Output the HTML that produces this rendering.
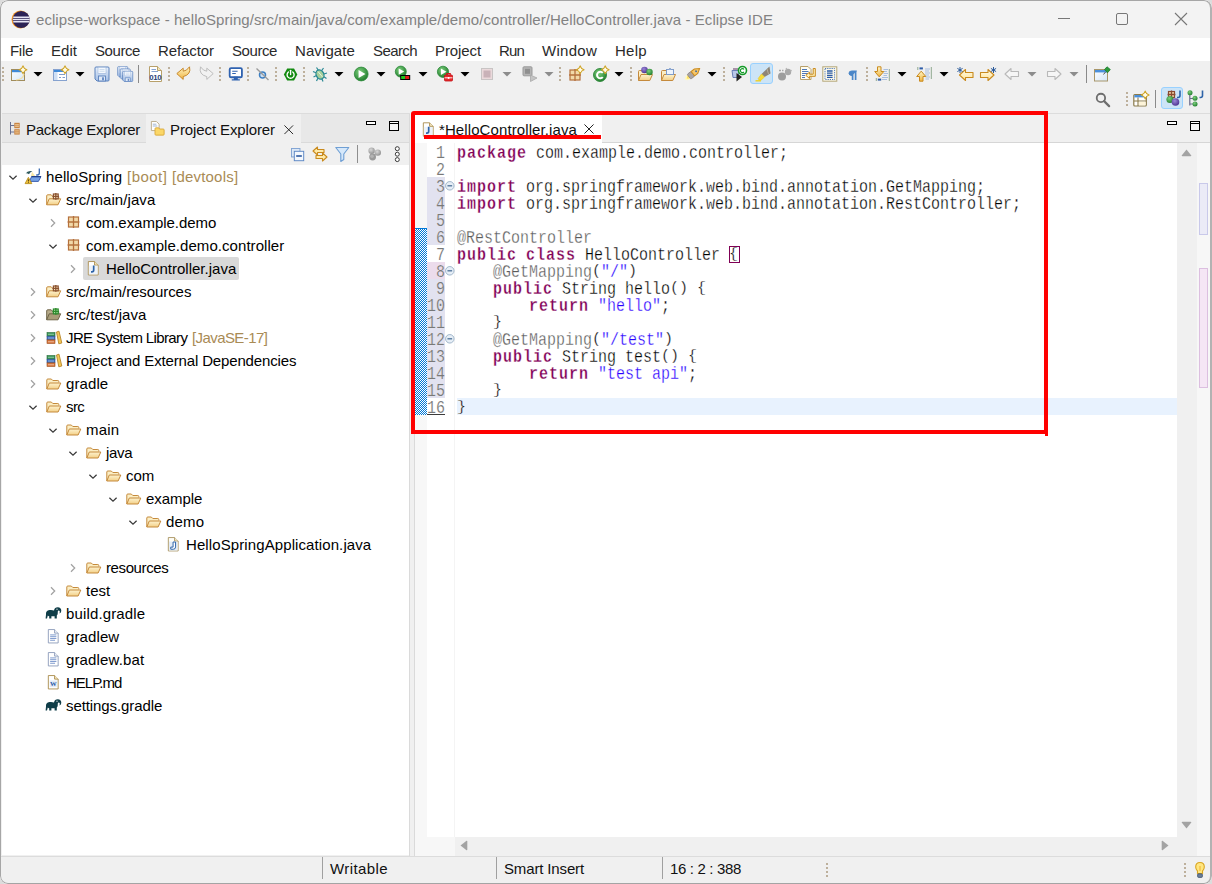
<!DOCTYPE html>
<html><head><meta charset="utf-8"><title>Eclipse IDE</title>
<style>
html,body{margin:0;padding:0}
body{width:1212px;height:884px;overflow:hidden;background:#dcdcdc;position:relative;font-family:"Liberation Sans", sans-serif;}
#win{position:absolute;left:0;top:0;width:1212px;height:884px;overflow:hidden;background:#f0f0f0;border-radius:8px}
#frame{position:absolute;left:0;top:0;width:1212px;height:884px;box-sizing:border-box;border:1px solid #a6a6a6;border-right:2px solid #b2b2b2;border-bottom:1px solid #a4a4a4;border-radius:8px;pointer-events:none}
.t{position:absolute;white-space:pre;line-height:20px;font-family:"Liberation Sans", sans-serif}
#title{position:absolute;left:0;top:0;width:1212px;height:38px;background:#f3f3f3}
#menu{position:absolute;left:1px;top:38px;width:1210px;height:23px;background:#fff}
.hd{position:absolute;width:2px;background:repeating-linear-gradient(#bdb09c 0 2px,transparent 2px 4px)}
.selbtn{position:absolute;background:#cce4f7;border:1px solid #99d1ff;border-radius:3px;box-sizing:border-box}
#lp{position:absolute;left:2px;top:113px;width:408px;height:743px;background:#f0f0f0;border-top:1px solid #dcdcdc;box-sizing:border-box}
#lp-tabs{position:absolute;left:2px;top:114px;width:408px;height:29px;background:#e8e8e8;border-bottom:1px solid #dadada;box-sizing:border-box}
#lp-active{position:absolute;left:146px;top:114px;width:155px;height:29px;background:#f0f0f0}
#lp-tree{position:absolute;left:2px;top:165px;width:408px;height:690px;background:#fff}
#ed{position:absolute;left:414px;top:113px;width:796px;height:743px;background:#f0f0f0;border-top:1px solid #dcdcdc;box-sizing:border-box}
#ed-tabs{position:absolute;left:415px;top:114px;width:795px;height:29px;background:#f0f0f0;border-bottom:1px solid #d6d6d6;box-sizing:border-box}
#ed-tab{position:absolute;left:415px;top:114px;width:187px;height:29px;background:#fff}
#ed-body{position:absolute;left:415px;top:143px;width:795px;height:713px;background:#fff}
.ln,.cl{position:absolute;font-family:"Liberation Mono", monospace;font-size:15px;line-height:17px;height:17px;white-space:pre;transform:scaleY(1.2);transform-origin:0 12px}
.ln{left:427px;width:18px;text-align:right;color:#787878;letter-spacing:0px}
.ln span{display:inline-block}
.cl{left:457px;color:#000;-webkit-text-stroke:0.25px #fff}
.ln{-webkit-text-stroke:0.12px #fff}
.cl b{color:#7f0055;letter-spacing:1px;font-weight:700;-webkit-text-stroke:0.25px #fff}
.bc{display:inline-block;transform:translateY(-1.2px) scaleY(0.86);transform-origin:0 50%}
#status{position:absolute;left:0;top:856px;width:1212px;height:28px;background:#f0f0f0;border-top:1px solid #dcdcdc;box-sizing:border-box}
.ic{position:absolute;overflow:visible}
#edge-b{position:absolute;left:0;top:882px;width:1212px;height:2px;background:linear-gradient(#c8c8c8,#8c8c8c)}
#edge-l{position:absolute;left:0;top:0;width:1px;height:884px;background:#9a9a9a}
#edge-r{position:absolute;left:1210px;top:0;width:2px;height:884px;background:#b0b0b0}
</style></head>
<body><div id="win">

<svg width="0" height="0" style="position:absolute">
<defs>
<linearGradient id="gY" x1="0" y1="0" x2="0" y2="1"><stop offset="0" stop-color="#fff6c8"/><stop offset="1" stop-color="#f0b440"/></linearGradient>
<linearGradient id="gYh" x1="0" y1="0" x2="0" y2="1"><stop offset="0" stop-color="#fffbe6"/><stop offset="1" stop-color="#ffe39a"/></linearGradient>
<linearGradient id="gF" x1="0" y1="0" x2="0" y2="1"><stop offset="0" stop-color="#fdf3d0"/><stop offset="1" stop-color="#f3cf86"/></linearGradient>
<linearGradient id="gB" x1="0" y1="0" x2="0" y2="1"><stop offset="0" stop-color="#eaf1fb"/><stop offset="1" stop-color="#a2bde4"/></linearGradient>
<linearGradient id="gW" x1="0" y1="0" x2="1" y2="1"><stop offset="0" stop-color="#ffffff"/><stop offset="1" stop-color="#d4e6f8"/></linearGradient>
<radialGradient id="gG" cx="0.4" cy="0.35" r="0.7"><stop offset="0" stop-color="#7ccf7c"/><stop offset="1" stop-color="#1e7a2a"/></radialGradient>
<radialGradient id="gP" cx="0.4" cy="0.35" r="0.7"><stop offset="0" stop-color="#9a86d8"/><stop offset="1" stop-color="#4a2f8e"/></radialGradient>
<radialGradient id="gGr" cx="0.4" cy="0.35" r="0.7"><stop offset="0" stop-color="#d8d8d8"/><stop offset="1" stop-color="#8e8e8e"/></radialGradient>
</defs></svg>

<div id="title"></div>
<svg class="ic" style="left:9.7px;top:9.5px" width="20" height="19" viewBox="0 0 20 19"><circle cx="10.5" cy="9.5" r="9" fill="#f7941e"/><circle cx="11.2" cy="9.5" r="8.6" fill="#2c2255"/><path d="M3.2 7.2H19.4M2.8 9.5H19.8M3.2 11.8H19.4" stroke="#e8e6f4" stroke-width="1.5"/></svg>
<span class="t" style="left:36px;top:9.5px;color:#828282;font-size:15px;letter-spacing:0.062px;">eclipse-workspace - helloSpring/src/main/java/com/example/demo/controller/HelloController.java - Eclipse IDE</span>
<div style="position:absolute;left:1058px;top:18px;width:12px;height:1px;background:#777"></div>
<div style="position:absolute;left:1116px;top:13px;width:10px;height:10px;border:1px solid #777;border-radius:2px"></div>
<svg style="position:absolute;left:1174px;top:12px" width="14" height="14" viewBox="0 0 14 14"><path d="M1 1L13 13M13 1L1 13" stroke="#777" stroke-width="1.1" fill="none"/></svg>
<div id="menu"></div>
<span class="t" style="left:10px;top:40.5px;color:#2a2a2a;font-size:15px;letter-spacing:-0.293px;">File</span>
<span class="t" style="left:51px;top:40.5px;color:#2a2a2a;font-size:15px;letter-spacing:0.035px;">Edit</span>
<span class="t" style="left:95px;top:40.5px;color:#2a2a2a;font-size:15px;letter-spacing:-0.422px;">Source</span>
<span class="t" style="left:158px;top:40.5px;color:#2a2a2a;font-size:15px;letter-spacing:-0.088px;">Refactor</span>
<span class="t" style="left:232px;top:40.5px;color:#2a2a2a;font-size:15px;letter-spacing:-0.422px;">Source</span>
<span class="t" style="left:295px;top:40.5px;color:#2a2a2a;font-size:15px;letter-spacing:0.100px;">Navigate</span>
<span class="t" style="left:373px;top:40.5px;color:#2a2a2a;font-size:15px;letter-spacing:-0.589px;">Search</span>
<span class="t" style="left:435px;top:40.5px;color:#2a2a2a;font-size:15px;letter-spacing:-0.098px;">Project</span>
<span class="t" style="left:499px;top:40.5px;color:#2a2a2a;font-size:15px;letter-spacing:-0.844px;">Run</span>
<span class="t" style="left:542px;top:40.5px;color:#2a2a2a;font-size:15px;letter-spacing:0.273px;">Window</span>
<span class="t" style="left:615px;top:40.5px;color:#2a2a2a;font-size:15px;letter-spacing:0.285px;">Help</span>
<div class="hd" style="left:2px;top:67px;height:14px"></div>
<svg class="ic" style="left:11px;top:66px" width="16" height="16" viewBox="0 0 16 16"><rect x="0.5" y="3.5" width="13" height="11" fill="url(#gW)" stroke="#a08c5c"/><rect x="1" y="4" width="12" height="2.2" fill="#3f8ad8"/><path d="M13 8Q12 13.5 5 14" fill="none" stroke="#f5dd9a" stroke-width="1.2"/><path d="M12 -0.10000000000000009Q12.8 3.0 15.9 3.8Q12.8 4.6 12 7.699999999999999Q11.2 4.6 8.1 3.8Q11.2 3.0 12 -0.10000000000000009Z" fill="#fdeea0" stroke="#cfa42a" stroke-width="1.1" stroke-linejoin="round"/><path d="M12 1.7V5.8999999999999995M9.9 3.8H14.1" stroke="#fffdf0" stroke-width="1.3"/></svg>
<svg style="position:absolute;left:33px;top:72px" width="10" height="5" viewBox="0 0 10 5"><path d="M0.5 0H9.5L5 4.6Z" fill="#000"/></svg>
<svg class="ic" style="left:53px;top:66px" width="16" height="16" viewBox="0 0 16 16"><rect x="0.5" y="3.5" width="13" height="11" fill="#fff" stroke="#86a2cf"/><rect x="1" y="4" width="12" height="2" fill="#3f8ad8"/><rect x="1" y="6" width="3.5" height="8" fill="#cfe0f5"/><path d="M6 8.5H12M6 11.5H8M9.5 11.5H12" stroke="#7f9cca" stroke-width="1.2"/><path d="M12 -0.10000000000000009Q12.8 3.0 15.9 3.8Q12.8 4.6 12 7.699999999999999Q11.2 4.6 8.1 3.8Q11.2 3.0 12 -0.10000000000000009Z" fill="#fdeea0" stroke="#cfa42a" stroke-width="1.1" stroke-linejoin="round"/><path d="M12 1.7V5.8999999999999995M9.9 3.8H14.1" stroke="#fffdf0" stroke-width="1.3"/></svg>
<svg style="position:absolute;left:75px;top:72px" width="10" height="5" viewBox="0 0 10 5"><path d="M0.5 0H9.5L5 4.6Z" fill="#000"/></svg>
<svg class="ic" style="left:94px;top:66px" width="16" height="16" viewBox="0 0 16 16"><g transform="translate(0.5 0.5) scale(1)"><path d="M1.5 0.5H13.5Q14.5 0.5 14.5 1.5V13.5Q14.5 14.5 13.5 14.5H2.5L0.5 12.5V1.5Q0.5 0.5 1.5 0.5Z" fill="url(#gB)" stroke="#5b82bd" stroke-width="1"/><rect x="3.5" y="0.8" width="8" height="6" fill="#f4f8fd" stroke="#9ab4da" stroke-width="0.6"/><path d="M5 3H10M5 4.8H10" stroke="#c4d4ea" stroke-width="0.8"/><rect x="4" y="9.5" width="7" height="5" fill="#dfe9f7" stroke="#5b82bd" stroke-width="0.9"/><rect x="7.5" y="10.8" width="2" height="3" fill="#6c8fc6"/></g></svg>
<svg class="ic" style="left:117px;top:66px" width="17" height="16" viewBox="0 0 17 16"><g transform="translate(0.3 0.3) scale(0.72)"><path d="M1.5 0.5H13.5Q14.5 0.5 14.5 1.5V13.5Q14.5 14.5 13.5 14.5H2.5L0.5 12.5V1.5Q0.5 0.5 1.5 0.5Z" fill="url(#gB)" stroke="#5b82bd" stroke-width="1"/><rect x="3.5" y="0.8" width="8" height="6" fill="#f4f8fd" stroke="#9ab4da" stroke-width="0.6"/><path d="M5 3H10M5 4.8H10" stroke="#c4d4ea" stroke-width="0.8"/><rect x="4" y="9.5" width="7" height="5" fill="#dfe9f7" stroke="#5b82bd" stroke-width="0.9"/><rect x="7.5" y="10.8" width="2" height="3" fill="#6c8fc6"/></g><g transform="translate(2.8 2.6) scale(0.72)"><path d="M1.5 0.5H13.5Q14.5 0.5 14.5 1.5V13.5Q14.5 14.5 13.5 14.5H2.5L0.5 12.5V1.5Q0.5 0.5 1.5 0.5Z" fill="url(#gB)" stroke="#5b82bd" stroke-width="1"/><rect x="3.5" y="0.8" width="8" height="6" fill="#f4f8fd" stroke="#9ab4da" stroke-width="0.6"/><path d="M5 3H10M5 4.8H10" stroke="#c4d4ea" stroke-width="0.8"/><rect x="4" y="9.5" width="7" height="5" fill="#dfe9f7" stroke="#5b82bd" stroke-width="0.9"/><rect x="7.5" y="10.8" width="2" height="3" fill="#6c8fc6"/></g><g transform="translate(5.3 5) scale(0.72)"><path d="M1.5 0.5H13.5Q14.5 0.5 14.5 1.5V13.5Q14.5 14.5 13.5 14.5H2.5L0.5 12.5V1.5Q0.5 0.5 1.5 0.5Z" fill="url(#gB)" stroke="#5b82bd" stroke-width="1"/><rect x="3.5" y="0.8" width="8" height="6" fill="#f4f8fd" stroke="#9ab4da" stroke-width="0.6"/><path d="M5 3H10M5 4.8H10" stroke="#c4d4ea" stroke-width="0.8"/><rect x="4" y="9.5" width="7" height="5" fill="#dfe9f7" stroke="#5b82bd" stroke-width="0.9"/><rect x="7.5" y="10.8" width="2" height="3" fill="#6c8fc6"/></g></svg>
<div style="position:absolute;left:138px;top:65px;width:1px;height:18px;background:#8a8a8a"></div>
<svg class="ic" style="left:148px;top:66px" width="16" height="16" viewBox="0 0 16 16"><path d="M1.5 0.5H9.5L13.5 4.5V15.5H1.5Z" fill="#fff" stroke="#b8a06a"/><path d="M9.5 0.5V4.5H13.5" fill="#f3e6b8" stroke="#b8a06a"/><path d="M3.5 3.5H8M3.5 5.5H10" stroke="#86a2cf" stroke-width="1"/><text x="1.2" y="14" font-family="Liberation Sans" font-weight="700" font-size="7.8" fill="#1f3f7a" letter-spacing="-0.3">010</text></svg>
<div class="hd" style="left:168px;top:67px;height:14px"></div>
<svg class="ic" style="left:176px;top:66px" width="16" height="16" viewBox="0 0 16 16"><path d="M0.8 7.6L7.2 2.2V5.2Q10.5 5.2 13.5 0.8Q15.5 8.5 7.2 10.6V13.4Z" fill="url(#gY)" stroke="#c8882a" stroke-width="1" stroke-linejoin="round"/></svg>
<svg class="ic" style="left:198px;top:66px" width="16" height="16" viewBox="0 0 16 16"><path d="M15.2 7.6L8.8 2.2V5.2Q5.5 5.2 2.5 0.8Q0.5 8.5 8.8 10.6V13.4Z" fill="#f2f2f2" stroke="#bdbdbd" stroke-width="1" stroke-linejoin="round"/></svg>
<div class="hd" style="left:219px;top:67px;height:14px"></div>
<svg class="ic" style="left:227.5px;top:66px" width="16" height="16" viewBox="0 0 16 16"><g transform="translate(0.6 1) scale(0.9)"><rect x="1.2" y="1.2" width="13.6" height="10.2" rx="1.5" fill="#fff" stroke="#2f62b0" stroke-width="2"/><path d="M4 4.8H10M4 7.2H8" stroke="#2f62b0" stroke-width="1.2"/><path d="M6.5 11.5H9.5V13.5H6.5ZM3.5 14.3H12.5" stroke="#2f62b0" stroke-width="1.4" fill="#2f62b0"/></g></svg>
<div class="hd" style="left:247px;top:67px;height:14px"></div>
<svg class="ic" style="left:255px;top:66px" width="16" height="16" viewBox="0 0 16 16"><circle cx="7.5" cy="9" r="3" fill="#cfe2f5" stroke="#3d7fc2" stroke-width="1.5"/><path d="M1.5 2.5L13.5 14" stroke="#9a9a9a" stroke-width="1.3"/></svg>
<div class="hd" style="left:275px;top:67px;height:14px"></div>
<svg class="ic" style="left:282.8px;top:66px" width="16" height="16" viewBox="0 0 16 16"><g transform="translate(0.4 1.3) scale(0.9)"><path d="M4.2 1.2H11.8L15.5 8L11.8 14.8H4.2L0.5 8Z" fill="#138a10"/><path d="M5.6 5.2A3.9 3.9 0 1 0 10.4 5.2" fill="none" stroke="#fff" stroke-width="1.5" stroke-linecap="round"/><path d="M8 3.4V8" stroke="#fff" stroke-width="1.5" stroke-linecap="round"/></g></svg>
<div class="hd" style="left:303px;top:67px;height:14px"></div>
<svg class="ic" style="left:312px;top:66px" width="16" height="16" viewBox="0 0 16 16"><path d="M4.5 1.5L6.5 4.5M11.5 2L9.8 4.5M1 5.5L4.5 7M15 7L11.8 8M1.5 11L4.5 9.5M14.5 12.5L11.5 10.5M4.5 15L6 12M11 15.5L9.8 12.5" stroke="#2b8a95" stroke-width="1.2" fill="none"/><ellipse cx="8" cy="8.5" rx="3.8" ry="4.8" transform="rotate(-25 8 8.5)" fill="#a6cf9c" stroke="#2b8a95" stroke-width="1.3"/><path d="M6 5.5L10.5 11" stroke="#e8f4e0" stroke-width="1"/></svg>
<svg style="position:absolute;left:334px;top:72px" width="10" height="5" viewBox="0 0 10 5"><path d="M0.5 0H9.5L5 4.6Z" fill="#000"/></svg>
<svg class="ic" style="left:353px;top:66px" width="16" height="16" viewBox="0 0 16 16"><circle cx="8.2" cy="8" r="6.9" fill="url(#gG)" stroke="#2c8a3a" stroke-width="0.8"/><path d="M5.577999999999999 3.998L12.478 8L5.577999999999999 12.001999999999999Z" fill="#fff"/></svg>
<svg style="position:absolute;left:376px;top:72px" width="10" height="5" viewBox="0 0 10 5"><path d="M0.5 0H9.5L5 4.6Z" fill="#000"/></svg>
<svg class="ic" style="left:395px;top:66px" width="16" height="16" viewBox="0 0 16 16"><circle cx="5.8" cy="5.6" r="5.5" fill="url(#gG)" stroke="#2c8a3a" stroke-width="0.8"/><path d="M3.71 2.4099999999999997L9.21 5.6L3.71 8.79Z" fill="#fff"/><rect x="5.2" y="9" width="10" height="5" fill="#000"/><rect x="6.2" y="10" width="4" height="3" fill="#1ec81e"/><rect x="10.2" y="10" width="4" height="3" fill="#e01818"/></svg>
<svg style="position:absolute;left:418px;top:72px" width="10" height="5" viewBox="0 0 10 5"><path d="M0.5 0H9.5L5 4.6Z" fill="#000"/></svg>
<svg class="ic" style="left:437px;top:66px" width="16" height="16" viewBox="0 0 16 16"><circle cx="6" cy="5.8" r="5.6" fill="url(#gG)" stroke="#2c8a3a" stroke-width="0.8"/><path d="M3.8720000000000003 2.552L9.472 5.8L3.8720000000000003 9.048Z" fill="#fff"/><rect x="7.5" y="9" width="8" height="6" rx="1" fill="#e8292c" stroke="#c01014" stroke-width="0.8"/><path d="M9.8 9V7.6H13.2V9" fill="none" stroke="#d01a1e" stroke-width="1.2"/><path d="M7.5 11.8H15.5" stroke="#fff" stroke-width="0.9"/><rect x="10.8" y="11" width="1.6" height="1.8" fill="#fff"/></svg>
<svg style="position:absolute;left:460px;top:72px" width="10" height="5" viewBox="0 0 10 5"><path d="M0.5 0H9.5L5 4.6Z" fill="#000"/></svg>
<svg class="ic" style="left:480px;top:66px" width="16" height="16" viewBox="0 0 16 16"><rect x="1.5" y="2.5" width="11" height="11" fill="#ead9db" stroke="#c8c4c4" stroke-width="1"/><rect x="3.5" y="4.5" width="7" height="7" fill="#c9b2b8"/></svg>
<svg style="position:absolute;left:502px;top:72px" width="10" height="5" viewBox="0 0 10 5"><path d="M0.5 0H9.5L5 4.6Z" fill="#8c8c8c"/></svg>
<svg class="ic" style="left:522px;top:66px" width="16" height="16" viewBox="0 0 16 16"><rect x="1" y="0.8" width="9" height="9" rx="1" fill="#b4b4b4" stroke="#9a9a9a"/><rect x="3" y="2.8" width="5" height="5" fill="#8f8f8f"/><path d="M8.5 9L15 12L8.5 15.5Z" fill="#c4c4c4" stroke="#a8a8a8" stroke-width="0.8"/></svg>
<svg style="position:absolute;left:544px;top:72px" width="10" height="5" viewBox="0 0 10 5"><path d="M0.5 0H9.5L5 4.6Z" fill="#8c8c8c"/></svg>
<div class="hd" style="left:559px;top:67px;height:14px"></div>
<svg class="ic" style="left:568px;top:66px" width="16" height="16" viewBox="0 0 16 16"><rect x="2" y="4" width="10" height="10" fill="#f2d9a8" stroke="#b5713c" stroke-width="1.2"/><path d="M7.0 3.1V14.9M1.1 9.0H12.9" stroke="#b5713c" stroke-width="1.3"/><path d="M12.2 -0.10000000000000009Q13.0 3.0 16.099999999999998 3.8Q13.0 4.6 12.2 7.699999999999999Q11.399999999999999 4.6 8.299999999999999 3.8Q11.399999999999999 3.0 12.2 -0.10000000000000009Z" fill="#fdeea0" stroke="#cfa42a" stroke-width="1.1" stroke-linejoin="round"/><path d="M12.2 1.7V5.8999999999999995M10.1 3.8H14.299999999999997" stroke="#fffdf0" stroke-width="1.3"/></svg>
<svg class="ic" style="left:593px;top:66px" width="16" height="16" viewBox="0 0 16 16"><circle cx="7" cy="9" r="6.5" fill="url(#gG)" stroke="#1f7f2c" stroke-width="0.8"/><path d="M9.8 6.8A3.3 3.3 0 1 0 9.8 11.2" fill="none" stroke="#fff" stroke-width="2"/><path d="M12.2 -0.10000000000000009Q13.0 3.0 16.099999999999998 3.8Q13.0 4.6 12.2 7.699999999999999Q11.399999999999999 4.6 8.299999999999999 3.8Q11.399999999999999 3.0 12.2 -0.10000000000000009Z" fill="#fdeea0" stroke="#cfa42a" stroke-width="1.1" stroke-linejoin="round"/><path d="M12.2 1.7V5.8999999999999995M10.1 3.8H14.299999999999997" stroke="#fffdf0" stroke-width="1.3"/></svg>
<svg style="position:absolute;left:614px;top:72px" width="10" height="5" viewBox="0 0 10 5"><path d="M0.5 0H9.5L5 4.6Z" fill="#000"/></svg>
<div class="hd" style="left:630px;top:67px;height:14px"></div>
<svg class="ic" style="left:637px;top:66px" width="16" height="16" viewBox="0 0 16 16"><g transform="translate(0 1)"><path d="M1.5 13.5V4.5Q1.5 3.5 2.5 3.5H6L7.5 5H12.5Q13.5 5 13.5 6V7" fill="#fbeec4" stroke="#c58a3c" stroke-width="1"/><path d="M1.5 13.5L4 7.5H15.5L12.8 13.5Z" fill="url(#gF)" stroke="#c58a3c" stroke-width="1" stroke-linejoin="round"/></g><circle cx="7.5" cy="4" r="3.3" fill="url(#gP)"/><circle cx="12.5" cy="6" r="3.2" fill="url(#gG)"/></svg>
<svg class="ic" style="left:660px;top:66px" width="16" height="16" viewBox="0 0 16 16"><g transform="translate(0 1)"><path d="M1.5 13.5V4.5Q1.5 3.5 2.5 3.5H6L7.5 5H12.5Q13.5 5 13.5 6V7" fill="#fbeec4" stroke="#c58a3c" stroke-width="1"/><path d="M1.5 13.5L4 7.5H15.5L12.8 13.5Z" fill="url(#gF)" stroke="#c58a3c" stroke-width="1" stroke-linejoin="round"/></g><rect x="6.5" y="3.5" width="7" height="5" fill="#eef4fc" stroke="#7f9cca"/><path d="M8.5 3.5Q10 1 11.5 3.5" fill="#a9bfe0" stroke="#7f9cca" stroke-width="0.8"/></svg>
<svg class="ic" style="left:684px;top:66px" width="17" height="16" viewBox="0 0 17 16"><g transform="rotate(-38 8.5 8)"><path d="M-1 8Q1 5 4 5.5V10.5Q1 11 -1 8Z" fill="#fff8c0"/><path d="M1 8Q3 6 5 6V10Q3 10 1 8Z" fill="#ffe060"/><rect x="4" y="5" width="5" height="6" rx="1" fill="#a9a4a4" stroke="#8a8484" stroke-width="0.8"/><path d="M9 5.2H13L17.5 8L13 10.8H9Z" fill="#f6c66a" stroke="#c98a1e" stroke-width="1"/><circle cx="13" cy="8" r="0.9" fill="#2d63a8"/></g></svg>
<svg style="position:absolute;left:707px;top:72px" width="10" height="5" viewBox="0 0 10 5"><path d="M0.5 0H9.5L5 4.6Z" fill="#000"/></svg>
<div class="hd" style="left:723px;top:67px;height:14px"></div>
<svg class="ic" style="left:731px;top:66px" width="16" height="16" viewBox="0 0 16 16"><path d="M1 4.5H8L7 11.5H2Z" fill="#b8c8ea" stroke="#6a7fb8"/><path d="M2 3H7" stroke="#8a6a8a" stroke-width="1.4"/><path d="M5.5 7L11 11L5.5 15.5Z" fill="#222"/><circle cx="11.5" cy="4.5" r="4" fill="#fff" stroke="#149a28" stroke-width="1.6"/><path d="M13 3.4A2 2 0 1 0 13 5.8" fill="none" stroke="#149a28" stroke-width="1.2"/></svg>
<div class="selbtn" style="left:750px;top:63px;width:23px;height:21px"></div>
<svg class="ic" style="left:754.5px;top:66px" width="16" height="16" viewBox="0 0 16 16"><path d="M14.5 0.5L15.5 7.5L9.5 11L6.5 8Z" fill="#8d8577"/><path d="M12 3L13.5 8" stroke="#b5ad9d" stroke-width="1"/><path d="M6.5 8L9.5 11L6 14.2Q3.5 14.8 3.2 12.5Z" fill="#f7dc3c" stroke="#e8c820" stroke-width="0.6"/><path d="M0.5 14.8H6" stroke="#f0d020" stroke-width="1.4"/></svg>
<svg class="ic" style="left:777px;top:66px" width="16" height="16" viewBox="0 0 16 16"><circle cx="5" cy="10.5" r="4" fill="#9d9d9d"/><circle cx="11" cy="6" r="3.2" fill="#a9a9a9"/><path d="M2 4.5H6.5" stroke="#a8a8a8" stroke-width="1.3" stroke-dasharray="2 1"/><path d="M9 2L10 3.5M14.5 4L13.5 5.5" stroke="#b4b4b4" stroke-width="1.2"/></svg>
<svg class="ic" style="left:800px;top:66px" width="16" height="16" viewBox="0 0 16 16"><path d="M0.5 0.5H8L11 3.5V13.5H0.5Z" fill="#fffdf2" stroke="#b8a06a"/><path d="M2 3.5H7M2 5.5H8.5M2 7.5H8.5M2 9.5H5M2 11.5H5" stroke="#4f78b8" stroke-width="1"/><path d="M13.2 2.5H15.3V10.3H9.5V12.5L5.8 9.3L9.5 6.2V8.2H13.2Z" fill="#fff1b8" stroke="#c98a1e" stroke-width="1" stroke-linejoin="round"/></svg>
<svg class="ic" style="left:822px;top:66px" width="16" height="16" viewBox="0 0 16 16"><rect x="0.8" y="0.8" width="14" height="14.4" fill="#fbf8ea" stroke="#b5a77a" stroke-width="1"/><rect x="3" y="2.5" width="9.6" height="11" fill="none" stroke="#4f78b8" stroke-width="1" stroke-dasharray="1.2 1"/><path d="M5 5H10.6M5 7.2H10.6M5 9.4H10.6M5 11.4H10.6" stroke="#2d5ca8" stroke-width="1.3"/></svg>
<svg class="ic" style="left:846px;top:66px" width="14" height="16" viewBox="0 0 14 16"><path d="M6.6 5.5V14M9.6 5.5V14" stroke="#4a86c8" stroke-width="1.7"/><path d="M10.8 5H5.8Q3 5 3 7.3Q3 9.5 6 9.5" fill="#4a86c8" stroke="#4a86c8" stroke-width="1"/></svg>
<div class="hd" style="left:866px;top:67px;height:14px"></div>
<svg class="ic" style="left:874px;top:66px" width="16" height="16" viewBox="0 0 16 16"><path d="M9.5 3.5H14M9.5 5.5H13M9.5 7.5H14M9.5 9.5H13M8 11.5H14M8 13.5H13" stroke="#a9bfe0" stroke-width="1"/><path d="M15.3 3V15" stroke="#8fa88f" stroke-width="1"/><path d="M2.3 12V15" stroke="#8fa88f" stroke-width="1"/><rect x="3.8" y="12.6" width="3.4" height="2" fill="#2d5ca8"/><path d="M3.5 0.8H7V5.5H9.8L5.2 10.8L0.7 5.5H3.5Z" fill="url(#gY)" stroke="#c98a1e" stroke-width="1" stroke-linejoin="round"/></svg>
<svg style="position:absolute;left:897px;top:72px" width="10" height="5" viewBox="0 0 10 5"><path d="M0.5 0H9.5L5 4.6Z" fill="#000"/></svg>
<svg class="ic" style="left:916px;top:66px" width="16" height="16" viewBox="0 0 16 16"><path d="M9 3H14M9 5H13M9 7H14M9 9H13M9.5 11H14M9.5 13H13" stroke="#a9bfe0" stroke-width="1"/><path d="M15.3 1V13" stroke="#8fa88f" stroke-width="1"/><path d="M1.8 1V4" stroke="#8fa88f" stroke-width="1"/><rect x="3.5" y="1.4" width="3.4" height="2" fill="#2d5ca8"/><path d="M3.5 15.2H7V10.5H9.8L5.2 5.2L0.7 10.5H3.5Z" fill="url(#gY)" stroke="#c98a1e" stroke-width="1" stroke-linejoin="round"/></svg>
<svg style="position:absolute;left:939px;top:72px" width="10" height="5" viewBox="0 0 10 5"><path d="M0.5 0H9.5L5 4.6Z" fill="#000"/></svg>
<svg class="ic" style="left:957px;top:66px" width="17" height="16" viewBox="0 0 17 16"><g transform="translate(1.5 1)"><path d="M1 8L7 2.5V5.5H14.5V10.5H7V13.5Z" fill="url(#gYh)" stroke="#c98a1e" stroke-width="1.1" stroke-linejoin="round"/></g><path d="M3 1V7M0.3999999999999999 2.4L5.6 5.6M0.3999999999999999 5.6L5.6 2.4" stroke="#2b5a9a" stroke-width="1"/></svg>
<svg class="ic" style="left:980px;top:66px" width="17" height="16" viewBox="0 0 17 16"><g transform="translate(-1 1)"><path d="M15 8L9 2.5V5.5H1.5V10.5H9V13.5Z" fill="url(#gYh)" stroke="#c98a1e" stroke-width="1.1" stroke-linejoin="round"/></g><path d="M13.5 1V7M10.9 2.4L16.1 5.6M10.9 5.6L16.1 2.4" stroke="#2b5a9a" stroke-width="1"/></svg>
<svg class="ic" style="left:1004px;top:66px" width="16" height="16" viewBox="0 0 16 16"><path d="M1 8L7 2.5V5.5H14.5V10.5H7V13.5Z" fill="#f6f6f6" stroke="#b9b9b9" stroke-width="1.1" stroke-linejoin="round"/></svg>
<svg style="position:absolute;left:1027px;top:72px" width="10" height="5" viewBox="0 0 10 5"><path d="M0.5 0H9.5L5 4.6Z" fill="#8c8c8c"/></svg>
<svg class="ic" style="left:1046px;top:66px" width="16" height="16" viewBox="0 0 16 16"><path d="M15 8L9 2.5V5.5H1.5V10.5H9V13.5Z" fill="#f6f6f6" stroke="#b9b9b9" stroke-width="1.1" stroke-linejoin="round"/></svg>
<svg style="position:absolute;left:1069px;top:72px" width="10" height="5" viewBox="0 0 10 5"><path d="M0.5 0H9.5L5 4.6Z" fill="#8c8c8c"/></svg>
<div style="position:absolute;left:1086px;top:65px;width:1px;height:18px;background:#8a8a8a"></div>
<svg class="ic" style="left:1094px;top:66px" width="17" height="16" viewBox="0 0 17 16"><rect x="0.5" y="3.5" width="13" height="11.5" fill="url(#gW)" stroke="#a8966a"/><rect x="1" y="4" width="12" height="2.4" fill="#4a90dc"/><path d="M9.5 8.5L11.5 6" stroke="#555" stroke-width="1"/><path d="M10.5 3.5L13 0.8L16.3 3.5L13.5 6.8Z" fill="#2c9a3c" stroke="#1c7a2a" stroke-width="0.8"/></svg>
<svg class="ic" style="left:1094.5px;top:91.5px" width="15.5" height="15.5" viewBox="0 0 17 17"><circle cx="6.5" cy="6.5" r="4.6" fill="none" stroke="#6e6e6e" stroke-width="2"/><path d="M10 10L15.5 15.5" stroke="#6e6e6e" stroke-width="2.4" stroke-linecap="round"/></svg>
<div class="hd" style="left:1126px;top:92px;height:14px"></div>
<svg class="ic" style="left:1133px;top:91px" width="16" height="16" viewBox="0 0 16 16"><rect x="0.8" y="3.5" width="12.5" height="11.5" rx="1" fill="#fff" stroke="#8a7a4a" stroke-width="1.2"/><rect x="1.4" y="4" width="11.4" height="2.4" fill="#4a90dc"/><path d="M5 6.5V15M1 10H13" stroke="#8a7a4a" stroke-width="1.1"/><rect x="6" y="10.8" width="6.5" height="3.5" fill="#fdf4d8"/><path d="M12.2 0.10000000000000009Q13.0 3.2 16.099999999999998 4Q13.0 4.8 12.2 7.9Q11.399999999999999 4.8 8.299999999999999 4Q11.399999999999999 3.2 12.2 0.10000000000000009Z" fill="#fdeea0" stroke="#cfa42a" stroke-width="1.1" stroke-linejoin="round"/><path d="M12.2 1.9000000000000001V6.1000000000000005M10.1 4H14.299999999999997" stroke="#fffdf0" stroke-width="1.3"/></svg>
<div style="position:absolute;left:1155px;top:90px;width:1px;height:18px;background:#8a8a8a"></div>
<div class="selbtn" style="left:1161px;top:87px;width:22px;height:22px"></div>
<svg class="ic" style="left:1165px;top:90px" width="16" height="16" viewBox="0 0 16 16"><rect x="3.5" y="1.5" width="6" height="6" fill="#f2d9a8" stroke="#8a4a30" stroke-width="1.2"/><path d="M6.5 0.6V8.4M2.6 4.5H10.4" stroke="#8a4a30" stroke-width="1.3"/><circle cx="5" cy="9.5" r="3.6" fill="url(#gG)"/><circle cx="10.5" cy="12" r="3.8" fill="url(#gP)"/><circle cx="9" cy="10.5" r="1.6" fill="#f0f0f8" opacity="0.0"/><path d="M15 0.5V5.5Q15 7.5 13 7.5H12" fill="none" stroke="#2d63a8" stroke-width="1.6"/></svg>
<svg class="ic" style="left:1187px;top:90px" width="17" height="16" viewBox="0 0 17 16"><path d="M2.8 3V15.5M2.8 8.5H7M2.8 14H7" stroke="#6a6a8a" stroke-width="1.2" fill="none"/><circle cx="3" cy="2.8" r="2.5" fill="url(#gG)"/><circle cx="8" cy="8.3" r="2.5" fill="url(#gG)"/><circle cx="8" cy="14" r="2.5" fill="url(#gG)"/><path d="M15.5 0.5V5.5Q15.5 7.5 13.5 7.5H12.5" fill="none" stroke="#2d63a8" stroke-width="1.6"/></svg>
<div id="lp"></div>
<div id="lp-tabs"></div>
<div id="lp-active"></div>
<div id="lp-tree"></div>
<svg class="ic" style="left:9px;top:121px" width="13" height="16" viewBox="0 0 13 16"><path d="M1.5 1V13.5M1.5 4.5H5.5M1.5 11H5.5" stroke="#6a7090" stroke-width="1" fill="none"/><rect x="5.3" y="1.8" width="5.4" height="5.4" fill="#c98442"/><path d="M6.4 2.9000000000000004h1.3v1.3h-1.3zM8.3 2.9000000000000004h1.3v1.3h-1.3zM6.4 4.8h1.3v1.3h-1.3zM8.3 4.8h1.3v1.3h-1.3z" fill="#f3d6a8"/><rect x="5.3" y="8.2" width="5.4" height="5.4" fill="#c98442"/><path d="M6.4 9.299999999999999h1.3v1.3h-1.3zM8.3 9.299999999999999h1.3v1.3h-1.3zM6.4 11.2h1.3v1.3h-1.3zM8.3 11.2h1.3v1.3h-1.3z" fill="#f3d6a8"/></svg>
<span class="t" style="left:26px;top:120.0px;color:#111;font-size:15px;letter-spacing:-0.275px;">Package Explorer</span>
<svg class="ic" style="left:149.5px;top:121px" width="15.5" height="15.5" viewBox="0 0 17 17"><path d="M1.5 0.5H7L10 3.5V10.5H1.5Z" fill="#fff" stroke="#b8a887"/><path d="M3 3.5H7M3 5.5H8" stroke="#9ab0d0" stroke-width="1"/><path d="M5.5 8.5Q5.5 7.5 6.5 7.5H9.5L10.5 8.8H14.5Q15.5 8.8 15.5 9.8V14.5Q15.5 15.5 14.5 15.5H6.5Q5.5 15.5 5.5 14.5Z" fill="#fbd768" stroke="#d9a83a"/></svg>
<span class="t" style="left:170px;top:120.0px;color:#111;font-size:15px;letter-spacing:-0.107px;">Project Explorer</span>
<svg style="position:absolute;left:284px;top:125px" width="9.5" height="9.5" viewBox="0 0 11 11"><path d="M0.5 0.5L10.5 10.5M10.5 0.5L0.5 10.5" stroke="#222" stroke-width="1.1"/></svg>
<svg class="ic" style="left:366px;top:121px" width="10" height="4" viewBox="0 0 10 4"><rect x="0.5" y="0.5" width="9" height="3" fill="#fff" stroke="#000"/></svg><svg class="ic" style="left:389px;top:121px" width="10" height="10" viewBox="0 0 10 10"><rect x="0.5" y="0.5" width="9" height="9" fill="#f6f6f6" stroke="#000"/><path d="M1 1.5H9" stroke="#fff"/><path d="M0 2.5H10" stroke="#000"/></svg>
<svg class="ic" style="left:291px;top:147.5px" width="13.2" height="13.2" viewBox="0 0 14 14"><rect x="0.5" y="0.5" width="9" height="9" fill="#dce8f6" stroke="#7fa2d2"/><rect x="3.5" y="3.5" width="10" height="10" fill="#f4f8fd" stroke="#5b86c4"/><path d="M5.5 8.5H11.5" stroke="#1f4f9a" stroke-width="1.6"/></svg>
<svg class="ic" style="left:312px;top:146px" width="16" height="16" viewBox="0 0 16 16"><path d="M1 5L5.5 1V3.5H12V6.5H5.5V9Z" fill="#ffeaa8" stroke="#c98a1e" stroke-width="1.1" stroke-linejoin="round"/><path d="M15 11L10.5 7V9.5H4V12.5H10.5V15Z" fill="#ffeaa8" stroke="#c98a1e" stroke-width="1.1" stroke-linejoin="round"/></svg>
<svg class="ic" style="left:335px;top:146px" width="15" height="16" viewBox="0 0 15 16"><path d="M0.8 1.5H13.8L8.8 8V13.5L5.8 15.5V8Z" fill="#d6e8fa" stroke="#6f9fd4" stroke-width="1.1" stroke-linejoin="round"/></svg>
<div style="position:absolute;left:357px;top:145px;width:1px;height:18px;background:#8e8e8e"></div>
<svg class="ic" style="left:367px;top:147px" width="16" height="14" viewBox="0 0 16 14"><circle cx="4.6" cy="3.8" r="3.2" fill="url(#gGr)"/><circle cx="10.8" cy="5.6" r="3.2" fill="url(#gGr)"/><circle cx="5.6" cy="10" r="3.4" fill="#9a9a9a"/><circle cx="5" cy="9.2" r="1.8" fill="#b4b4b4"/></svg>
<svg class="ic" style="left:393px;top:145px" width="8" height="18" viewBox="0 0 8 18"><circle cx="4.3" cy="3.7" r="2" fill="#fff" stroke="#3a3a3a" stroke-width="1"/><circle cx="4.3" cy="9.2" r="2" fill="#fff" stroke="#3a3a3a" stroke-width="1"/><circle cx="4.3" cy="14.6" r="2" fill="#fff" stroke="#3a3a3a" stroke-width="1"/></svg>
<svg style="position:absolute;left:8px;top:175.0px" width="10" height="6" viewBox="0 0 10 6"><path d="M1.4 0.7L5 4.2L8.6 0.7" stroke="#383838" stroke-width="1.2" fill="none"/></svg>
<svg class="ic" style="left:25px;top:168.0px" width="17" height="17" viewBox="0 0 17 17"><path d="M0.7 5.4Q2.6 2 7.4 3.2Q4.8 4.2 4 6.2Q2.2 5 0.7 5.4Z" fill="#2f5a5e"/><path d="M7 3.8L10.6 8.4H5.8Z" fill="#f8e8a4"/><path d="M14.3 0.5V5Q14.3 7 12.3 7H11.2" fill="none" stroke="#3a6ab0" stroke-width="1.3"/><path d="M6.6 8.6H16L13.4 13.4H4.4Z" fill="#76a2e6" stroke="#2f55a8" stroke-width="0.9" stroke-linejoin="round"/><path d="M6.6 8.6H16" stroke="#1f3f8a" stroke-width="1.2"/><path d="M3.4 9.4L6.8 15.6H0.1Z" fill="#f4c63e" stroke="#b98c1a" stroke-width="0.9" stroke-linejoin="round"/><path d="M3.4 11.4V13.5M3.4 14.2V14.9" stroke="#3a2a0a" stroke-width="0.9"/></svg>
<span class="t" style="left:46px;top:167.0px;color:#000;font-size:15px;letter-spacing:0.112px;">helloSpring</span>
<span class="t" style="left:127px;top:167.0px;color:#a98b55;font-size:15px;letter-spacing:0.461px;">[boot]</span>
<span class="t" style="left:172px;top:167.0px;color:#a98b55;font-size:15px;letter-spacing:0.208px;">[devtools]</span>
<svg style="position:absolute;left:28px;top:198.0px" width="10" height="6" viewBox="0 0 10 6"><path d="M1.4 0.7L5 4.2L8.6 0.7" stroke="#383838" stroke-width="1.2" fill="none"/></svg>
<svg class="ic" style="left:46px;top:191.0px" width="16" height="16" viewBox="0 0 16 16"><g transform="translate(-0.8 0.3)"><path d="M1.5 13.5V4.5Q1.5 3.5 2.5 3.5H6L7.5 5H12.5Q13.5 5 13.5 6V7" fill="#fbeec4" stroke="#c58a3c" stroke-width="1"/><path d="M1.5 13.5L4 7.5H15.5L12.8 13.5Z" fill="url(#gF)" stroke="#c58a3c" stroke-width="1" stroke-linejoin="round"/></g><rect x="7.4" y="3" width="4.8" height="4.8" fill="#f8e6c0" stroke="#8a5230" stroke-width="1.2"/><path d="M9.8 2.1V8.7M6.5 5.4H13.1" stroke="#8a5230" stroke-width="1.3"/></svg>
<span class="t" style="left:66px;top:190.0px;color:#000;font-size:15px;letter-spacing:0.072px;">src/main/java</span>
<svg style="position:absolute;left:50px;top:217.5px" width="6" height="10" viewBox="0 0 6 10"><path d="M1 1.3L4.7 5L1 8.7" stroke="#a2a2a2" stroke-width="1.25" fill="none"/></svg>
<svg class="ic" style="left:66px;top:214.0px" width="16" height="16" viewBox="0 0 16 16"><rect x="2.5" y="3" width="10" height="10" fill="#f2d9a8" stroke="#b5713c" stroke-width="1.2"/><path d="M7.5 2.1V13.9M1.6 8.0H13.4" stroke="#b5713c" stroke-width="1.3"/></svg>
<span class="t" style="left:86px;top:213.0px;color:#000;font-size:15px;letter-spacing:-0.038px;">com.example.demo</span>
<svg style="position:absolute;left:48px;top:244.0px" width="10" height="6" viewBox="0 0 10 6"><path d="M1.4 0.7L5 4.2L8.6 0.7" stroke="#383838" stroke-width="1.2" fill="none"/></svg>
<svg class="ic" style="left:66px;top:237.0px" width="16" height="16" viewBox="0 0 16 16"><rect x="2.5" y="3" width="10" height="10" fill="#f2d9a8" stroke="#b5713c" stroke-width="1.2"/><path d="M7.5 2.1V13.9M1.6 8.0H13.4" stroke="#b5713c" stroke-width="1.3"/></svg>
<span class="t" style="left:86px;top:236.0px;color:#000;font-size:15px;letter-spacing:0.057px;">com.example.demo.controller</span>
<div style="position:absolute;left:83px;top:257.0px;width:156px;height:23px;background:#d9d9d9;border-radius:2px"></div>
<svg style="position:absolute;left:70px;top:263.5px" width="6" height="10" viewBox="0 0 6 10"><path d="M1 1.3L4.7 5L1 8.7" stroke="#a2a2a2" stroke-width="1.25" fill="none"/></svg>
<svg class="ic" style="left:87px;top:260.5px" width="12.5" height="14.5" viewBox="0 0 14 16"><path d="M1.5 0.5H8.5L12.5 4.5V15.5H1.5Z" fill="#fff" stroke="#a88a4a"/><path d="M8.5 0.5V4.5H12.5" fill="#f5e8c0" stroke="#a88a4a"/><rect x="2" y="5" width="10" height="10" fill="#e6eef8" opacity="0.7"/><path d="M7.5 5V10Q7.5 12 5.5 12H4.5" fill="none" stroke="#2d63a8" stroke-width="1.9"/></svg>
<span class="t" style="left:106px;top:259.0px;color:#000;font-size:15px;letter-spacing:0.011px;">HelloController.java</span>
<svg style="position:absolute;left:30px;top:286.5px" width="6" height="10" viewBox="0 0 6 10"><path d="M1 1.3L4.7 5L1 8.7" stroke="#a2a2a2" stroke-width="1.25" fill="none"/></svg>
<svg class="ic" style="left:46px;top:283.0px" width="16" height="16" viewBox="0 0 16 16"><g transform="translate(-0.8 0.3)"><path d="M1.5 13.5V4.5Q1.5 3.5 2.5 3.5H6L7.5 5H12.5Q13.5 5 13.5 6V7" fill="#fbeec4" stroke="#c58a3c" stroke-width="1"/><path d="M1.5 13.5L4 7.5H15.5L12.8 13.5Z" fill="url(#gF)" stroke="#c58a3c" stroke-width="1" stroke-linejoin="round"/></g><rect x="7.4" y="3" width="4.8" height="4.8" fill="#f8e6c0" stroke="#8a5230" stroke-width="1.2"/><path d="M9.8 2.1V8.7M6.5 5.4H13.1" stroke="#8a5230" stroke-width="1.3"/></svg>
<span class="t" style="left:66px;top:282.0px;color:#000;font-size:15px;letter-spacing:-0.078px;">src/main/resources</span>
<svg style="position:absolute;left:30px;top:309.5px" width="6" height="10" viewBox="0 0 6 10"><path d="M1 1.3L4.7 5L1 8.7" stroke="#a2a2a2" stroke-width="1.25" fill="none"/></svg>
<svg class="ic" style="left:46px;top:306.0px" width="16" height="16" viewBox="0 0 16 16"><g transform="translate(-0.8 -0.7)"><path d="M1.5 14.5V5.5Q1.5 4.5 2.5 4.5H6L7.5 6H12.5Q13.5 6 13.5 7V8" fill="#b8ac8c" stroke="#6e6448" stroke-width="1"/><path d="M1.5 14.5L4 8.5H15.5L12.8 14.5Z" fill="#a89c78" stroke="#6e6448" stroke-width="1" stroke-linejoin="round"/></g><rect x="7.4" y="3" width="4.8" height="4.8" fill="#a8e0a0" stroke="#2c8a2c" stroke-width="1.2"/><path d="M9.8 2.1V8.7M6.5 5.4H13.1" stroke="#2c8a2c" stroke-width="1.3"/></svg>
<span class="t" style="left:66px;top:305.0px;color:#000;font-size:15px;letter-spacing:0.021px;">src/test/java</span>
<svg style="position:absolute;left:30px;top:332.5px" width="6" height="10" viewBox="0 0 6 10"><path d="M1 1.3L4.7 5L1 8.7" stroke="#a2a2a2" stroke-width="1.25" fill="none"/></svg>
<svg class="ic" style="left:46px;top:329.0px" width="16" height="16" viewBox="0 0 16 16"><rect x="1" y="3.5" width="8" height="3.6" fill="#3a9a5a" stroke="#2a6a3a" stroke-width="0.6"/><rect x="1" y="7.2" width="8" height="3.6" fill="#3f74c0" stroke="#2a4a8a" stroke-width="0.6"/><rect x="1" y="10.9" width="8" height="3.6" fill="#d87840" stroke="#9a4a1a" stroke-width="0.6"/><path d="M2 5.3H8M2 9H8M2 12.7H8" stroke="#fff" stroke-width="0.7" opacity="0.6"/><path d="M10.5 3L13 2.2L15.8 14L12.8 14.8Z" fill="#f4c858" stroke="#b8862a" stroke-width="0.9" stroke-linejoin="round"/></svg>
<span class="t" style="left:66px;top:328.0px;color:#000;font-size:15px;letter-spacing:-0.625px;">JRE System Library</span>
<span class="t" style="left:192px;top:328.0px;color:#a98b55;font-size:15px;letter-spacing:-0.584px;">[JavaSE-17]</span>
<svg style="position:absolute;left:30px;top:355.5px" width="6" height="10" viewBox="0 0 6 10"><path d="M1 1.3L4.7 5L1 8.7" stroke="#a2a2a2" stroke-width="1.25" fill="none"/></svg>
<svg class="ic" style="left:46px;top:352.0px" width="16" height="16" viewBox="0 0 16 16"><rect x="1" y="3.5" width="8" height="3.6" fill="#3a9a5a" stroke="#2a6a3a" stroke-width="0.6"/><rect x="1" y="7.2" width="8" height="3.6" fill="#3f74c0" stroke="#2a4a8a" stroke-width="0.6"/><rect x="1" y="10.9" width="8" height="3.6" fill="#d87840" stroke="#9a4a1a" stroke-width="0.6"/><path d="M2 5.3H8M2 9H8M2 12.7H8" stroke="#fff" stroke-width="0.7" opacity="0.6"/><path d="M10.5 3L13 2.2L15.8 14L12.8 14.8Z" fill="#f4c858" stroke="#b8862a" stroke-width="0.9" stroke-linejoin="round"/></svg>
<span class="t" style="left:66px;top:351.0px;color:#000;font-size:15px;letter-spacing:-0.147px;">Project and External Dependencies</span>
<svg style="position:absolute;left:30px;top:378.5px" width="6" height="10" viewBox="0 0 6 10"><path d="M1 1.3L4.7 5L1 8.7" stroke="#a2a2a2" stroke-width="1.25" fill="none"/></svg>
<svg class="ic" style="left:46px;top:375.0px" width="16" height="16" viewBox="0 0 16 16"><g transform="translate(-0.7 0.5)"><path d="M1.5 13.5V4.5Q1.5 3.5 2.5 3.5H6L7.5 5H12.5Q13.5 5 13.5 6V7" fill="#fbeec4" stroke="#c58a3c" stroke-width="1"/><path d="M1.5 13.5L4 7.5H15.5L12.8 13.5Z" fill="url(#gF)" stroke="#c58a3c" stroke-width="1" stroke-linejoin="round"/></g></svg>
<span class="t" style="left:66px;top:374.0px;color:#000;font-size:15px;letter-spacing:0.099px;">gradle</span>
<svg style="position:absolute;left:28px;top:405.0px" width="10" height="6" viewBox="0 0 10 6"><path d="M1.4 0.7L5 4.2L8.6 0.7" stroke="#383838" stroke-width="1.2" fill="none"/></svg>
<svg class="ic" style="left:46px;top:398.0px" width="16" height="16" viewBox="0 0 16 16"><g transform="translate(-0.7 0.5)"><path d="M1.5 13.5V4.5Q1.5 3.5 2.5 3.5H6L7.5 5H12.5Q13.5 5 13.5 6V7" fill="#fbeec4" stroke="#c58a3c" stroke-width="1"/><path d="M1.5 13.5L4 7.5H15.5L12.8 13.5Z" fill="url(#gF)" stroke="#c58a3c" stroke-width="1" stroke-linejoin="round"/></g></svg>
<span class="t" style="left:66px;top:397.0px;color:#000;font-size:15px;letter-spacing:-0.567px;">src</span>
<svg style="position:absolute;left:48px;top:428.0px" width="10" height="6" viewBox="0 0 10 6"><path d="M1.4 0.7L5 4.2L8.6 0.7" stroke="#383838" stroke-width="1.2" fill="none"/></svg>
<svg class="ic" style="left:66px;top:421.0px" width="16" height="16" viewBox="0 0 16 16"><g transform="translate(-0.7 0.5)"><path d="M1.5 13.5V4.5Q1.5 3.5 2.5 3.5H6L7.5 5H12.5Q13.5 5 13.5 6V7" fill="#fbeec4" stroke="#c58a3c" stroke-width="1"/><path d="M1.5 13.5L4 7.5H15.5L12.8 13.5Z" fill="url(#gF)" stroke="#c58a3c" stroke-width="1" stroke-linejoin="round"/></g></svg>
<span class="t" style="left:86px;top:420.0px;color:#000;font-size:15px;letter-spacing:0.196px;">main</span>
<svg style="position:absolute;left:68px;top:451.0px" width="10" height="6" viewBox="0 0 10 6"><path d="M1.4 0.7L5 4.2L8.6 0.7" stroke="#383838" stroke-width="1.2" fill="none"/></svg>
<svg class="ic" style="left:86px;top:444.0px" width="16" height="16" viewBox="0 0 16 16"><g transform="translate(-0.7 0.5)"><path d="M1.5 13.5V4.5Q1.5 3.5 2.5 3.5H6L7.5 5H12.5Q13.5 5 13.5 6V7" fill="#fbeec4" stroke="#c58a3c" stroke-width="1"/><path d="M1.5 13.5L4 7.5H15.5L12.8 13.5Z" fill="url(#gF)" stroke="#c58a3c" stroke-width="1" stroke-linejoin="round"/></g></svg>
<span class="t" style="left:106px;top:443.0px;color:#000;font-size:15px;letter-spacing:-0.308px;">java</span>
<svg style="position:absolute;left:88px;top:474.0px" width="10" height="6" viewBox="0 0 10 6"><path d="M1.4 0.7L5 4.2L8.6 0.7" stroke="#383838" stroke-width="1.2" fill="none"/></svg>
<svg class="ic" style="left:106px;top:467.0px" width="16" height="16" viewBox="0 0 16 16"><g transform="translate(-0.7 0.5)"><path d="M1.5 13.5V4.5Q1.5 3.5 2.5 3.5H6L7.5 5H12.5Q13.5 5 13.5 6V7" fill="#fbeec4" stroke="#c58a3c" stroke-width="1"/><path d="M1.5 13.5L4 7.5H15.5L12.8 13.5Z" fill="url(#gF)" stroke="#c58a3c" stroke-width="1" stroke-linejoin="round"/></g></svg>
<span class="t" style="left:126px;top:466.0px;color:#000;font-size:15px;letter-spacing:-0.015px;">com</span>
<svg style="position:absolute;left:108px;top:497.0px" width="10" height="6" viewBox="0 0 10 6"><path d="M1.4 0.7L5 4.2L8.6 0.7" stroke="#383838" stroke-width="1.2" fill="none"/></svg>
<svg class="ic" style="left:126px;top:490.0px" width="16" height="16" viewBox="0 0 16 16"><g transform="translate(-0.7 0.5)"><path d="M1.5 13.5V4.5Q1.5 3.5 2.5 3.5H6L7.5 5H12.5Q13.5 5 13.5 6V7" fill="#fbeec4" stroke="#c58a3c" stroke-width="1"/><path d="M1.5 13.5L4 7.5H15.5L12.8 13.5Z" fill="url(#gF)" stroke="#c58a3c" stroke-width="1" stroke-linejoin="round"/></g></svg>
<span class="t" style="left:146px;top:489.0px;color:#000;font-size:15px;letter-spacing:-0.058px;">example</span>
<svg style="position:absolute;left:128px;top:520.0px" width="10" height="6" viewBox="0 0 10 6"><path d="M1.4 0.7L5 4.2L8.6 0.7" stroke="#383838" stroke-width="1.2" fill="none"/></svg>
<svg class="ic" style="left:146px;top:513.0px" width="16" height="16" viewBox="0 0 16 16"><g transform="translate(-0.7 0.5)"><path d="M1.5 13.5V4.5Q1.5 3.5 2.5 3.5H6L7.5 5H12.5Q13.5 5 13.5 6V7" fill="#fbeec4" stroke="#c58a3c" stroke-width="1"/><path d="M1.5 13.5L4 7.5H15.5L12.8 13.5Z" fill="url(#gF)" stroke="#c58a3c" stroke-width="1" stroke-linejoin="round"/></g></svg>
<span class="t" style="left:166px;top:512.0px;color:#000;font-size:15px;letter-spacing:0.192px;">demo</span>
<svg class="ic" style="left:167px;top:536.5px" width="12.5" height="14.5" viewBox="0 0 14 16"><path d="M1.5 0.5H8.5L12.5 4.5V15.5H1.5Z" fill="#fdfdf8" stroke="#a8925e"/><path d="M8.5 0.5V4.5H12.5" fill="#f2ead0" stroke="#a8925e"/><rect x="2.2" y="5" width="9.6" height="10" fill="#e4ecf6"/><path d="M6.8 5.5H9.6V11Q9.6 13.6 7 13.6H4.2V11.2H6.8Z" fill="#fff" stroke="#2d63a8" stroke-width="1.1"/></svg>
<span class="t" style="left:186px;top:535.0px;color:#000;font-size:15px;letter-spacing:0.100px;">HelloSpringApplication.java</span>
<svg style="position:absolute;left:70px;top:562.5px" width="6" height="10" viewBox="0 0 6 10"><path d="M1 1.3L4.7 5L1 8.7" stroke="#a2a2a2" stroke-width="1.25" fill="none"/></svg>
<svg class="ic" style="left:86px;top:559.0px" width="16" height="16" viewBox="0 0 16 16"><g transform="translate(-0.7 0.5)"><path d="M1.5 13.5V4.5Q1.5 3.5 2.5 3.5H6L7.5 5H12.5Q13.5 5 13.5 6V7" fill="#fbeec4" stroke="#c58a3c" stroke-width="1"/><path d="M1.5 13.5L4 7.5H15.5L12.8 13.5Z" fill="url(#gF)" stroke="#c58a3c" stroke-width="1" stroke-linejoin="round"/></g></svg>
<span class="t" style="left:106px;top:558.0px;color:#000;font-size:15px;letter-spacing:-0.395px;">resources</span>
<svg style="position:absolute;left:50px;top:585.5px" width="6" height="10" viewBox="0 0 6 10"><path d="M1 1.3L4.7 5L1 8.7" stroke="#a2a2a2" stroke-width="1.25" fill="none"/></svg>
<svg class="ic" style="left:66px;top:582.0px" width="16" height="16" viewBox="0 0 16 16"><g transform="translate(-0.7 0.5)"><path d="M1.5 13.5V4.5Q1.5 3.5 2.5 3.5H6L7.5 5H12.5Q13.5 5 13.5 6V7" fill="#fbeec4" stroke="#c58a3c" stroke-width="1"/><path d="M1.5 13.5L4 7.5H15.5L12.8 13.5Z" fill="url(#gF)" stroke="#c58a3c" stroke-width="1" stroke-linejoin="round"/></g></svg>
<span class="t" style="left:86px;top:581.0px;color:#000;font-size:15px;letter-spacing:0.028px;">test</span>
<svg class="ic" style="left:44.5px;top:605.0px" width="17" height="16" viewBox="0 0 17 16"><path d="M1 9.5Q0.5 5.5 4.5 5Q7 4.6 9 5.5Q9.6 2.2 12.8 2.2Q16.2 2.4 16.3 5.8Q16.3 8 14.5 8.4L14.8 6.6Q14.6 5.4 13.6 5.4Q12.6 5.6 12.8 7.2Q13 9.6 11.8 10.4V13.5H9.6V11.2H6.4V13.5H4.2V11.2Q3.2 11.2 2.8 10.4L2 13.5H0.6Z" fill="#0f3d48"/><circle cx="12" cy="4.2" r="0.6" fill="#fff"/></svg>
<span class="t" style="left:66px;top:604.0px;color:#000;font-size:15px;letter-spacing:0.145px;">build.gradle</span>
<svg class="ic" style="left:47px;top:628.5px" width="12.5" height="14.5" viewBox="0 0 14 16"><path d="M1.5 0.5H8.5L12.5 4.5V15.5H1.5Z" fill="#fff" stroke="#8a9ab8"/><path d="M8.5 0.5V4.5H12.5" fill="#eef2f8" stroke="#8a9ab8"/><path d="M3.5 6.5H10.5M3.5 8.5H10.5M3.5 10.5H10.5M3.5 12.5H9" stroke="#6f8fc8" stroke-width="1"/></svg>
<span class="t" style="left:66px;top:627.0px;color:#000;font-size:15px;letter-spacing:0.110px;">gradlew</span>
<svg class="ic" style="left:47px;top:651.5px" width="12.5" height="14.5" viewBox="0 0 14 16"><path d="M1.5 0.5H8.5L12.5 4.5V15.5H1.5Z" fill="#fff" stroke="#8a9ab8"/><path d="M8.5 0.5V4.5H12.5" fill="#eef2f8" stroke="#8a9ab8"/><path d="M3.5 6.5H10.5M3.5 8.5H10.5M3.5 10.5H10.5M3.5 12.5H9" stroke="#6f8fc8" stroke-width="1"/></svg>
<span class="t" style="left:66px;top:650.0px;color:#000;font-size:15px;letter-spacing:0.142px;">gradlew.bat</span>
<svg class="ic" style="left:47px;top:674.5px" width="12.5" height="14.5" viewBox="0 0 14 16"><path d="M1.5 0.5H8.5L12.5 4.5V15.5H1.5Z" fill="#fff" stroke="#a88a4a"/><path d="M8.5 0.5V4.5H12.5" fill="#f5e8c0" stroke="#a88a4a"/><rect x="3" y="6" width="8" height="7.5" fill="#e2ebf6"/><text x="3.4" y="12.6" font-family="Liberation Serif" font-weight="700" font-size="7.5" fill="#2d5ca8">W</text></svg>
<span class="t" style="left:66px;top:673.0px;color:#000;font-size:15px;letter-spacing:-0.995px;">HELP.md</span>
<svg class="ic" style="left:44.5px;top:697.0px" width="17" height="16" viewBox="0 0 17 16"><path d="M1 9.5Q0.5 5.5 4.5 5Q7 4.6 9 5.5Q9.6 2.2 12.8 2.2Q16.2 2.4 16.3 5.8Q16.3 8 14.5 8.4L14.8 6.6Q14.6 5.4 13.6 5.4Q12.6 5.6 12.8 7.2Q13 9.6 11.8 10.4V13.5H9.6V11.2H6.4V13.5H4.2V11.2Q3.2 11.2 2.8 10.4L2 13.5H0.6Z" fill="#0f3d48"/><circle cx="12" cy="4.2" r="0.6" fill="#fff"/></svg>
<span class="t" style="left:66px;top:696.0px;color:#000;font-size:15px;letter-spacing:-0.084px;">settings.gradle</span>
<div id="ed"></div>
<div id="ed-tabs"></div>
<div id="ed-tab"></div>
<div id="ed-body"></div>
<svg class="ic" style="left:421.5px;top:121.5px" width="12.5" height="15" viewBox="0 0 14 16"><path d="M1.5 0.5H8.5L12.5 4.5V15.5H1.5Z" fill="#fff" stroke="#a88a4a"/><path d="M8.5 0.5V4.5H12.5" fill="#f5e8c0" stroke="#a88a4a"/><rect x="2" y="5" width="10" height="10" fill="#e6eef8" opacity="0.7"/><path d="M7.5 5V10Q7.5 12 5.5 12H4.5" fill="none" stroke="#2d63a8" stroke-width="1.9"/></svg>
<span class="t" style="left:439px;top:120.0px;color:#111;font-size:15px;letter-spacing:0.100px;">*HelloController.java</span>
<svg style="position:absolute;left:584px;top:124px" width="10" height="10" viewBox="0 0 11 11"><path d="M0.5 0.5L10.5 10.5M10.5 0.5L0.5 10.5" stroke="#222" stroke-width="1.1"/></svg>
<svg class="ic" style="left:1167px;top:121px" width="10" height="4" viewBox="0 0 10 4"><rect x="0.5" y="0.5" width="9" height="3" fill="#fff" stroke="#000"/></svg><svg class="ic" style="left:1190px;top:121px" width="10" height="10" viewBox="0 0 10 10"><rect x="0.5" y="0.5" width="9" height="9" fill="#f6f6f6" stroke="#000"/><path d="M1 1.5H9" stroke="#fff"/><path d="M0 2.5H10" stroke="#000"/></svg>
<div style="position:absolute;left:415px;top:143px;width:12px;height:694px;background:#f7f7f7"></div>
<div style="position:absolute;left:454px;top:143px;width:1px;height:694px;background:#f4f4f4"></div>
<div style="position:absolute;left:415px;top:228px;width:12px;height:187px;background:repeating-conic-gradient(#0078d7 0% 25%,#fff 0% 50%) 0 0/2px 2px;border-top:1px solid #0078d7;box-sizing:border-box"></div>
<div style="position:absolute;left:427px;top:177px;width:18px;height:68px;background:#e2e2f0"></div>
<div style="position:absolute;left:427px;top:262px;width:18px;height:17px;background:#ecdcec"></div>
<div style="position:absolute;left:427px;top:279px;width:18px;height:119px;background:#e2e2f0"></div>
<div style="position:absolute;left:457px;top:398px;width:720px;height:17px;background:#e8f2fe"></div>
<div class="ln" style="top:146px"><span>1</span></div>
<div class="cl" style="top:146px"><b>package</b> com.example.demo.controller;</div>
<div class="ln" style="top:163px"><span>2</span></div>
<div class="ln" style="top:180px"><span>3</span></div>
<div class="cl" style="top:180px"><b>import</b> org.springframework.web.bind.annotation.GetMapping;</div>
<div class="ln" style="top:197px"><span>4</span></div>
<div class="cl" style="top:197px"><b>import</b> org.springframework.web.bind.annotation.RestController;</div>
<div class="ln" style="top:214px"><span>5</span></div>
<div class="ln" style="top:231px"><span>6</span></div>
<div class="cl" style="top:231px"><span style="color:#5a5a5a">@RestController</span></div>
<div class="ln" style="top:248px"><span>7</span></div>
<div class="cl" style="top:248px"><b>public</b> <b>class</b> HelloController <span class="bc">{</span></div>
<div class="ln" style="top:265px"><span>8</span></div>
<div class="cl" style="top:265px">    <span style="color:#5a5a5a">@GetMapping</span><span class="bc">(</span><span style="color:#2a00ff">&quot;/&quot;</span><span class="bc">)</span></div>
<div class="ln" style="top:282px"><span>9</span></div>
<div class="cl" style="top:282px">    <b>public</b> String hello<span class="bc">(</span><span class="bc">)</span> <span class="bc">{</span></div>
<div class="ln" style="top:299px"><span>10</span></div>
<div class="cl" style="top:299px">        <b>return</b> <span style="color:#2a00ff">&quot;hello&quot;</span>;</div>
<div class="ln" style="top:316px"><span>11</span></div>
<div class="cl" style="top:316px">    <span class="bc">}</span></div>
<div class="ln" style="top:333px"><span>12</span></div>
<div class="cl" style="top:333px">    <span style="color:#5a5a5a">@GetMapping</span><span class="bc">(</span><span style="color:#2a00ff">&quot;/test&quot;</span><span class="bc">)</span></div>
<div class="ln" style="top:350px"><span>13</span></div>
<div class="cl" style="top:350px">    <b>public</b> String test<span class="bc">(</span><span class="bc">)</span> <span class="bc">{</span></div>
<div class="ln" style="top:367px"><span>14</span></div>
<div class="cl" style="top:367px">        <b>return</b> <span style="color:#2a00ff">&quot;test api&quot;</span>;</div>
<div class="ln" style="top:384px"><span>15</span></div>
<div class="cl" style="top:384px">    <span class="bc">}</span></div>
<div class="ln" style="top:401px"><span>16</span></div>
<div class="cl" style="top:401px"><span class="bc">}</span></div>
<div style="position:absolute;left:729px;top:246px;width:9px;height:15px;border:1px solid #7f0055;box-sizing:content-box"></div>
<div style="position:absolute;left:427px;top:414px;width:18px;height:1px;background:#3c3c3c"></div>
<svg style="position:absolute;left:445px;top:181px" width="9.6" height="9.6" viewBox="0 0 9 9"><circle cx="4.5" cy="4.5" r="4" fill="#e6eef6" stroke="#9db3c8" stroke-width="0.9"/><path d="M2.3 4.5H6.7" stroke="#4a6e96" stroke-width="1.2"/></svg>
<svg style="position:absolute;left:445px;top:266px" width="9.6" height="9.6" viewBox="0 0 9 9"><circle cx="4.5" cy="4.5" r="4" fill="#e6eef6" stroke="#9db3c8" stroke-width="0.9"/><path d="M2.3 4.5H6.7" stroke="#4a6e96" stroke-width="1.2"/></svg>
<svg style="position:absolute;left:445px;top:334px" width="9.6" height="9.6" viewBox="0 0 9 9"><circle cx="4.5" cy="4.5" r="4" fill="#e6eef6" stroke="#9db3c8" stroke-width="0.9"/><path d="M2.3 4.5H6.7" stroke="#4a6e96" stroke-width="1.2"/></svg>
<div style="position:absolute;left:1177px;top:143px;width:20px;height:694px;background:#f0f0f0"></div>
<div style="position:absolute;left:1197px;top:143px;width:13px;height:713px;background:#f7f7f7"></div>
<svg style="position:absolute;left:1181px;top:149px" width="11" height="8" viewBox="0 0 11 8"><path d="M5.5 0.5L10.3 6.5Q10.5 7.3 9.5 7.3H1.5Q0.5 7.3 0.7 6.5Z" fill="#a3a3a3"/></svg>
<svg style="position:absolute;left:1181px;top:821px" width="11" height="8" viewBox="0 0 11 8"><path d="M5.5 7.5L10.3 1.5Q10.5 0.7 9.5 0.7H1.5Q0.5 0.7 0.7 1.5Z" fill="#a3a3a3"/></svg>
<div style="position:absolute;left:455px;top:837px;width:722px;height:19px;background:#f0f0f0"></div>
<div style="position:absolute;left:415px;top:837px;width:40px;height:19px;background:#f7f7f7"></div>
<div style="position:absolute;left:1177px;top:837px;width:20px;height:19px;background:#f0f0f0"></div>
<svg style="position:absolute;left:460px;top:840px" width="8" height="11" viewBox="0 0 8 11"><path d="M0.5 5.5L6.5 0.7Q7.3 0.5 7.3 1.5V9.5Q7.3 10.5 6.5 10.3Z" fill="#a3a3a3"/></svg>
<svg style="position:absolute;left:1161px;top:840px" width="8" height="11" viewBox="0 0 8 11"><path d="M7.5 5.5L1.5 0.7Q0.7 0.5 0.7 1.5V9.5Q0.7 10.5 1.5 10.3Z" fill="#a3a3a3"/></svg>
<div style="position:absolute;left:1199px;top:183px;width:9px;height:52px;background:#ebebf7;border:1px solid #c9c9ea;box-sizing:border-box"></div>
<div style="position:absolute;left:1199px;top:268px;width:9px;height:120px;background:#f5e6f5;border:1px solid #dcbfe0;box-sizing:border-box"></div>
<div style="position:absolute;left:409px;top:114px;width:1px;height:742px;background:#dadada"></div>
<div style="position:absolute;left:414px;top:114px;width:1px;height:742px;background:#dadada"></div>
<div id="status"></div>
<div style="position:absolute;left:322px;top:857px;width:1px;height:22px;background:#a0a0a0"></div>
<div style="position:absolute;left:496px;top:857px;width:1px;height:22px;background:#a0a0a0"></div>
<div style="position:absolute;left:662px;top:857px;width:1px;height:22px;background:#a0a0a0"></div>
<span class="t" style="left:330px;top:859.0px;color:#111;font-size:15px;letter-spacing:0.406px;">Writable</span>
<span class="t" style="left:504px;top:859.0px;color:#111;font-size:15px;letter-spacing:-0.141px;">Smart Insert</span>
<span class="t" style="left:670px;top:859.0px;color:#111;font-size:15px;letter-spacing:-0.339px;">16 : 2 : 388</span>
<div class="hd" style="left:826px;top:863px;height:14px"></div>
<div class="hd" style="left:1184px;top:863px;height:14px"></div>
<svg class="ic" style="left:1194px;top:861px" width="12" height="18" viewBox="0 0 12 18"><path d="M6 1.5Q10.3 1.5 10.3 6Q10.3 8.2 8.5 10V12.5H3.5V10Q1.7 8.2 1.7 6Q1.7 1.5 6 1.5Z" fill="#ffe680" stroke="#d9a520" stroke-width="1.1"/><path d="M6 5V10" stroke="#f0b030" stroke-width="1"/><rect x="3.6" y="12.8" width="4.8" height="3.6" rx="1" fill="#6a7f9a" stroke="#3f5270" stroke-width="0.8"/></svg>
<div style="position:absolute;left:411px;top:111px;width:629px;height:315px;border:4px solid #ff0000;border-radius:3px 0 0 0"></div>
<div style="position:absolute;left:1045px;top:430px;width:3px;height:6px;background:#ff0000"></div>
<div style="position:absolute;left:424px;top:135px;width:177px;height:4px;background:#ff0000"></div>
<div id="frame"></div>
</div></body></html>
